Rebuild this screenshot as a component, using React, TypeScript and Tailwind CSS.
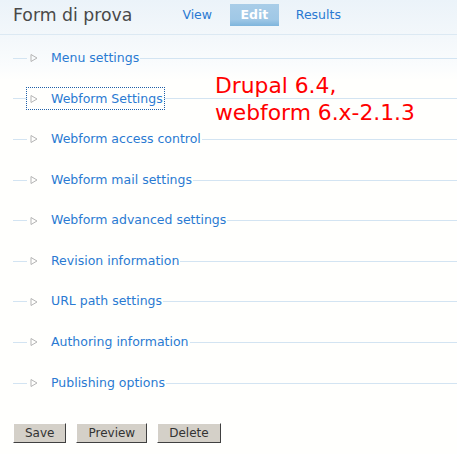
const SECTIONS = [
  "Menu settings",
  "Webform Settings",
  "Webform access control",
  "Webform mail settings",
  "Webform advanced settings",
  "Revision information",
  "URL path settings",
  "Authoring information",
  "Publishing options",
];

function Legend({ label, focused }: { label: string; focused?: boolean }) {
  return (
    <div className="flex h-[40.6px] items-center">
      <div className="h-px w-[14px] bg-[#d3e4f2]" />
      <span
        className={
          "flex h-[21px] items-center pl-[2px] pr-[1px] " +
          (focused ? "outline outline-1 outline-dotted outline-[#1f5fa8]" : "outline-none")
        }
      >
        <svg width="10" height="10" viewBox="0 0 10 10" className="mr-[12px]">
          <path d="M2 1.5 L8 5 L2 8.5 Z" fill="none" stroke="#b5b5b5" strokeWidth="1" />
        </svg>
        <span className="text-[12.5px] text-[#2a7ad2]">{label}</span>
      </span>
      <div className="h-px flex-1 bg-[#d3e4f2]" />
    </div>
  );
}

function Btn({ children }: { children: string }) {
  return (
    <button className="h-[20px] bg-[#d4d0c8] px-[11px] text-[12px] leading-none text-[#333] border border-t-[#fff] border-l-[#fff] border-b-[#404040] border-r-[#404040]">
      {children}
    </button>
  );
}

export default function App() {
  return (
    <div
      className="relative h-[454px] w-[457px] overflow-hidden bg-[linear-gradient(to_bottom,#ebf3f9_0px,#f4f8fb_40px,#fafcfd_65px,#fffffd_80px)]"
      style={{ fontFamily: '"DejaVu Sans", Verdana, sans-serif' }}
    >
      <div className="flex h-[35px] items-center border-b border-[#dce9f3] pl-[13px]">
        <h1 className="text-[17.3px] leading-none text-[#494949] pb-[2px]">Form di prova</h1>
        <nav className="ml-[37px] flex items-center pb-[4px] text-[12.5px]">
          <span className="pl-[13px] pr-[18px] text-[#2a7ad2]">View</span>
          <span className="flex h-[22px] items-center bg-[linear-gradient(to_bottom,#a9cde8,#a0c8e6_70%,#7eb5dc)] px-[10.5px] font-bold text-white">
            Edit
          </span>
          <span className="px-[17px] text-[#2a7ad2]">Results</span>
        </nav>
      </div>

      <div className="pl-[13px] pt-[3px]">
        {SECTIONS.map((s) => (
          <Legend key={s} label={s} focused={s === "Webform Settings"} />
        ))}
      </div>

      <div className="mt-[20px] flex gap-[10px] pl-[13px]">
        <Btn>Save</Btn>
        <Btn>Preview</Btn>
        <Btn>Delete</Btn>
      </div>

      <div className="absolute left-[215px] top-[72px] text-[21.8px] leading-[27px] text-[#f00]">
        Drupal 6.4,
        <br />
        webform 6.x-2.1.3
      </div>
    </div>
  );
}
